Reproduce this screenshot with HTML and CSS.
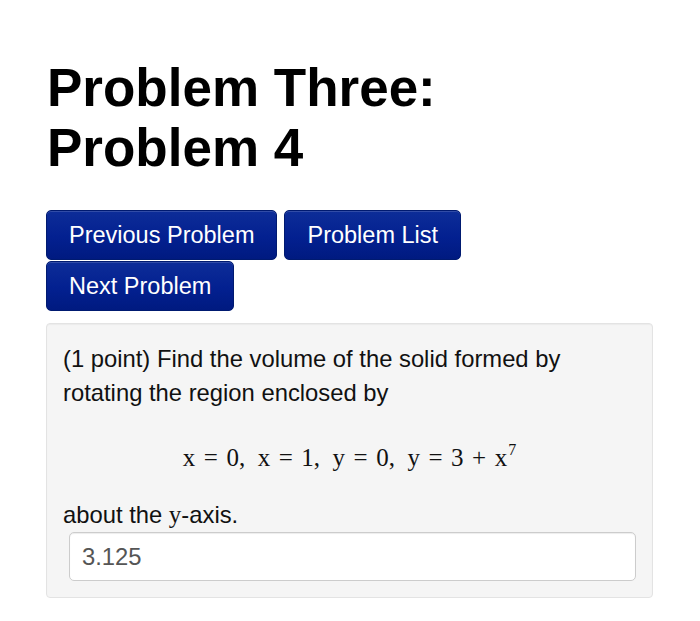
FILE: index.html
```html
<!DOCTYPE html>
<html lang="en">
<head>
    <meta charset="UTF-8">
    <meta name="viewport" content="width=device-width, initial-scale=1.0">
    <title>Problem 4</title>
    <link rel="stylesheet" href="styles.css">
</head>
<body>
    <div class="main-content">
        <h1 class="page-title">Problem Three:<br>Problem 4</h1>

        <div class="nav-buttons">
            <button class="nav-button">Previous Problem</button>
            <button class="nav-button">Problem List</button>
            <button class="nav-button">Next Problem</button>
        </div>

        <div class="problem-box">
            <p class="problem-text">(1 point) Find the volume of the solid formed by rotating the region enclosed by</p>
            <div class="math-line">
                x<span class="mo">=</span>0,&nbsp; x<span class="mo">=</span>1,&nbsp; y<span class="mo">=</span>0,&nbsp; y<span class="mo">=</span>3<span class="mo">+</span>x<sup>7</sup>
            </div>
            <p class="problem-text">about the <span class="mi-inline">y</span>-axis.</p>
            <input class="answer-input" type="text" value="3.125">
        </div>
    </div>
</body>
</html>
```

FILE: styles.css
```css
* { margin: 0; padding: 0; box-sizing: border-box; }
body { font-family: 'Liberation Sans', Arial, sans-serif; background: #ffffff; color: #000; }
.main-content { padding: 58px 47px 0 46px; }
.page-title { font-size: 53px; font-weight: 700; line-height: 60px; color: #000; margin-left: 1px; }
.nav-buttons { display: flex; flex-wrap: wrap; column-gap: 7px; row-gap: 1px; max-width: 480px; margin-top: 32px; }
.nav-button { font-family: 'Liberation Sans', Arial, sans-serif; font-size: 23.5px; line-height: 28px; color: #fff; padding: 10px 22px 10px 22px; height: 50px; border: 1px solid #001a70; border-radius: 5px; background: linear-gradient(to bottom, #0d2d98 0%, #032090 55%, #001a80 100%); box-shadow: inset 0 1px 0 rgba(255,255,255,0.15); cursor: pointer; }
.nav-button:hover { background: #001a80; }
.problem-box { margin-top: 12px; background: #f5f5f5; border: 1px solid #e3e3e3; border-radius: 4px; padding: 18px 16px 16px 16px; box-shadow: inset 0 1px 1px rgba(0,0,0,0.04); }
.problem-text { font-size: 23.8px; line-height: 34px; color: #111; }
.math-line { font-family: 'Liberation Serif', 'Times New Roman', serif; font-size: 25px; line-height: 34px; text-align: center; margin: 31px 0 23px; color: #111; }
.math-line .mo { padding: 0 8.5px; }
.math-line sup { font-size: 16px; vertical-align: 11px; line-height: 0; margin-left: 1px; }
.mi-inline { font-family: 'Liberation Serif', 'Times New Roman', serif; font-size: 25px; }
.answer-input { display: block; margin-left: 6px; width: calc(100% - 6px); height: 49px; font-family: 'Liberation Sans', Arial, sans-serif; font-size: 23.8px; color: #555; padding: 0 12px; background: #fff; border: 1px solid #ccc; border-radius: 5px; box-shadow: inset 0 1px 1px rgba(0,0,0,0.075); outline: none; }
```
